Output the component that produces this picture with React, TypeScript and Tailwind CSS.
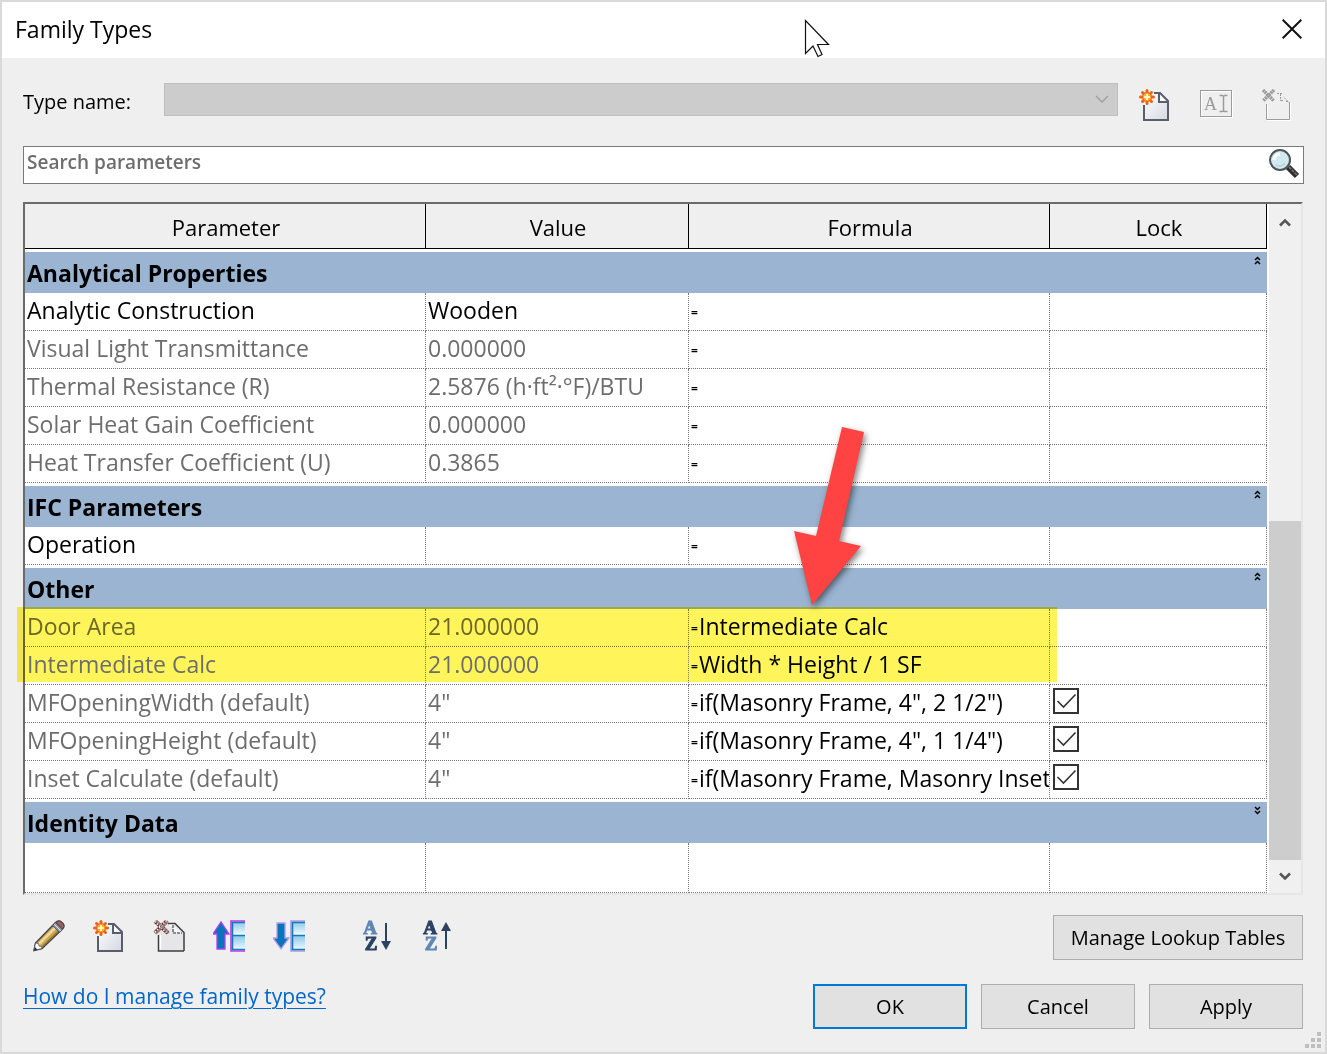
import { type ReactNode } from "react";

type Param = {
  name: string;
  value: ReactNode;
  formula?: string;
  enabled?: boolean;
  locked?: boolean;
  marked?: boolean;
};

type Group = { title: string; collapsed?: boolean; params: Param[] };

const GROUPS: Group[] = [
  {
    title: "Analytical Properties",
    params: [
      { name: "Analytic Construction", value: "Wooden", enabled: true },
      { name: "Visual Light Transmittance", value: "0.000000" },
      { name: "Thermal Resistance (R)", value: "2.5876 (h·ft²·°F)/BTU" },
      { name: "Solar Heat Gain Coefficient", value: "0.000000" },
      { name: "Heat Transfer Coefficient (U)", value: "0.3865" },
    ],
  },
  { title: "IFC Parameters", params: [{ name: "Operation", value: "", enabled: true }] },
  {
    title: "Other",
    params: [
      { name: "Door Area", value: "21.000000", formula: "Intermediate Calc", marked: true },
      { name: "Intermediate Calc", value: "21.000000", formula: "Width * Height / 1 SF" },
      { name: "MFOpeningWidth (default)", value: '4"', formula: 'if(Masonry Frame, 4", 2 1/2")', locked: true },
      { name: "MFOpeningHeight (default)", value: '4"', formula: 'if(Masonry Frame, 4", 1 1/4")', locked: true },
      { name: "Inset Calculate (default)", value: '4"', formula: "if(Masonry Frame, Masonry Inset", locked: true },
    ],
  },
  { title: "Identity Data", collapsed: true, params: [] },
];

function Spark() {
  return (
    <g>
      <g stroke="#e8641b" strokeWidth="3" strokeLinecap="round">
        <path d="M8 1.500v13M1.500 8h13M3.500 3.500l9 9M12.500 3.500l-9 9" />
      </g>
      <circle cx="8" cy="8" r="4.500" fill="#fbab25" stroke="#e8641b" strokeWidth="1" />
      <path d="M8 5v6M5 8h6" stroke="#fff3c4" strokeWidth="2" />
    </g>
  );
}

function NewIcon({ id }: { id: string }) {
  return (
    <svg viewBox="0 0 32 32" className="size-8" aria-hidden="true">
      <defs>
        <linearGradient id={id} x1="0" y1="0" x2="1" y2="1">
          <stop offset="0" stopColor="#ffffff" />
          <stop offset="1" stopColor="#d5d8e2" />
        </linearGradient>
      </defs>
      <path d="M5 12V31H29V12L21 4H12z" fill={`url(#${id})`} />
      <path d="M5 16V31H29V12L21 4H15" fill="none" stroke="#5a5e6a" strokeWidth="2" />
      <path d="M20 5v8h8" fill="#fafafa" stroke="#5a5e6a" strokeWidth="2" />
      <Spark />
    </svg>
  );
}

function RenameIcon() {
  return (
    <svg viewBox="0 0 32 32" className="size-8 overflow-visible" aria-hidden="true">
      <rect x="1.5" y="2.5" width="31" height="26" fill="none" stroke="#fff" />
      <rect x="0.5" y="1.5" width="31" height="26" fill="none" stroke="#9b9b9b" />
      <text x="4" y="21" fontFamily="Liberation Serif, serif" fontSize="18" fill="#9b9b9b">A</text>
      <path d="M19.500 6.500h3l1 1 1-1h3M23.500 7v14M19.500 22.500h3l1-1 1 1h3" fill="none" stroke="#9b9b9b" strokeWidth="1.500" />
    </svg>
  );
}

function DeleteDisabledIcon() {
  return (
    <svg viewBox="0 0 32 32" className="size-8" aria-hidden="true">
      <path d="M6.500 16v15.500h23V13" fill="none" stroke="#fff" />
      <path d="M5.500 15v15.500h23V13" fill="none" stroke="#9b9b9b" />
      <path d="M2 1l11 11M13 1L2 12" stroke="#9b9b9b" strokeWidth="3.500" strokeDasharray="2 .6" />
      <path d="M16 4.500h6M19.500 5v7M20 11.500h3M23 8.500l5 5M25 12.500h3" stroke="#9b9b9b" strokeDasharray="2 1" fill="none" />
    </svg>
  );
}

function DeleteIcon() {
  return (
    <svg viewBox="0 0 32 32" className="size-8" aria-hidden="true">
      <path d="M6 12V31H31V12L23 4H14z" fill="#e6e6e8" />
      <path d="M5.500 15V31H31M15 3.500h7l9 9V31" fill="none" stroke="#3f3f3f" strokeWidth="1.500" />
      <path d="M7.500 15V29.500M16 5.500h5" fill="none" stroke="#fff" strokeWidth="1.500" />
      <path d="M20 5v8h9" fill="#f4f4f4" stroke="#6a6a6a" strokeWidth="1.500" strokeDasharray="3 1" />
      <path d="M2 1l13 12M14 1L2 13" stroke="#6d2222" strokeWidth="4" />
      <path d="M2 1l13 12M14 1L2 13" stroke="#f5f5f5" strokeWidth="3" strokeDasharray="1.500 1.500" />
      <path d="M3 1l13 12M15 1L3 13" stroke="#8b8b8b" strokeWidth="1.500" />
    </svg>
  );
}

function PencilIcon() {
  return (
    <svg viewBox="0 0 32 32" className="size-8" aria-hidden="true">
      <path d="M1 30.500L2.500 23 22.500 2.500c2-2 4-2 6-.5l1.500 1.500c1.500 2 1 4-.5 5.500L9 28.500z" fill="#caa350" stroke="#42444c" strokeWidth="1.400" />
      <path d="M4.500 23.500L22 6l2 2L6.500 25.500z" fill="#efd797" />
      <path d="M7.500 27.500L25.500 10l1 1L9 28z" fill="#94722c" />
      <path d="M1 30.500L2.500 23l3 .5.500 2.500 2.500.5.500 2z" fill="#fafafa" stroke="#55575e" strokeWidth=".8" />
      <path d="M1 30.500l.8-3.500 2.700 2.700z" fill="#2b2b2b" />
      <path d="M19.500 5.500l3-3 7 7-3 3z" fill="#8b94a4" stroke="#42444c" strokeWidth=".8" />
      <path d="M21 4l7 7" stroke="#dfe3ea" />
      <path d="M23 2.500c2-2 4-2 5.500-.5l1.500 1.500c1.500 2 1 4-.5 5.500z" fill="#9a5f5c" stroke="#42444c" strokeWidth=".8" />
    </svg>
  );
}

function MoveIcon({ down, id }: { down?: boolean; id: string }) {
  return (
    <svg viewBox="0 0 32 32" className="size-8" aria-hidden="true">
      <defs>
        <linearGradient id={id} x1="0" y1="0" x2="0" y2="1">
          <stop offset="0" stopColor="#8cc8ea" />
          <stop offset="1" stopColor="#f4fbff" />
        </linearGradient>
      </defs>
      <path
        d={down ? "M4 3h8v15h4L8 29 0 18h4z" : "M4 29V14H0L8 2l8 12h-4v15z"}
        fill="#0a74bb"
        stroke={down ? "#b49be8" : "#b63cf0"}
        strokeWidth="1.300"
      />
      <path d="M32 1H18v30h14" fill="none" stroke={down ? "#a99be8" : "#b63cf0"} strokeWidth="1.600" />
      <rect x="19" y="2" width="13" height="13" fill={`url(#${id})`} />
      <rect x="19" y="16" width="13" height="14" fill={`url(#${id})`} />
      <path d="M32 2.500H19.500v27H32M19.500 15.500H32" fill="none" stroke="#1878b4" strokeWidth="1.600" />
    </svg>
  );
}

function SortIcon({ up }: { up?: boolean }) {
  const light = "#5f88b4";
  const dark = "#2b4263";
  return (
    <svg viewBox="0 0 32 32" className="size-8 overflow-visible" aria-hidden="true">
      <g fontFamily="Liberation Serif, serif" fontWeight="700" fontSize="19" textAnchor="middle" strokeWidth="1">
        <text x="9" y="14" fill={up ? dark : light} stroke={up ? dark : light}>A</text>
        <text x="10" y="30" fill={up ? light : dark} stroke={up ? light : dark}>Z</text>
      </g>
      <path d={up ? "M25 29V8" : "M25 3v21"} stroke={dark} strokeWidth="2" />
      <path d={up ? "M25 2l5 9H20z" : "M25 30l5-9H20z"} fill={dark} />
    </svg>
  );
}

function SearchIcon() {
  return (
    <svg viewBox="0 0 32 32" className="size-8" aria-hidden="true">
      <path d="M20 19l9 9" stroke="#2e2e2e" strokeWidth="6" />
      <path d="M21 19l8 8" stroke="#7a7a7a" strokeWidth="1.500" strokeDasharray="3 1" />
      <circle cx="12" cy="12" r="10" fill="#d3e9f0" stroke="#4b5457" strokeWidth="2" />
      <path d="M6 12a6 6 0 016-6" stroke="#fff" strokeWidth="3" fill="none" />
      <path d="M8 17a7 7 0 009-2" stroke="#b2d9e4" strokeWidth="2" fill="none" />
    </svg>
  );
}

function GroupChevron({ collapsed }: { collapsed?: boolean }) {
  return (
    <svg viewBox="0 0 7 9" className="h-[9px] w-[7px]" fill="none" stroke="#000" strokeWidth="1.500" aria-hidden="true">
      <path d={collapsed ? "M1 1l2.500 2.500L6 1M1 5l2.500 2.500L6 5" : "M1 4l2.500-2.500L6 4M1 8l2.500-2.500L6 8"} />
    </svg>
  );
}

function ScrollArrow({ down }: { down?: boolean }) {
  return (
    <svg viewBox="0 0 12 9" className="h-[9px] w-3" fill="none" stroke="#555" strokeWidth="2.600" aria-hidden="true">
      <path d={down ? "M1 1.500l5 5 5-5" : "M1 7.500l5-5 5 5"} />
    </svg>
  );
}

/* Marker stroke over the two calculated rows, and the arrow that points at them. */
function Callout() {
  return (
    <>
      <span className="pointer-events-none absolute -top-0.5 -left-2 h-[75px] w-[83.7%] bg-[#fff45a] mix-blend-multiply" />
      <svg
        viewBox="0 0 84 190"
        className="pointer-events-none absolute -top-[187px] left-[61.6%] z-10 h-[190px] w-[84px] overflow-visible drop-shadow-[2px_3px_3px_rgba(0,0,0,0.5)]"
        aria-hidden="true"
      >
        <path d="M52 5l22 5-25 109 22 5-49 59L4 109l22 5z" fill="#ff4242" />
      </svg>
    </>
  );
}

const CELL = "h-[38px] border-r border-b border-dotted border-[#777] p-0 pb-1 text-left align-middle font-normal";

function ParamRow({ p }: { p: Param }) {
  const tone = p.enabled ? "text-black" : "text-[#6d6d6d]";
  return (
    <tr className="relative">
      <th scope="row" className={`${CELL} ${tone} pl-0.5 whitespace-nowrap`}>
        {p.name}
        {p.marked && <Callout />}
      </th>
      <td className={`${CELL} ${tone} pl-0.5 whitespace-nowrap`}>{p.value}</td>
      <td className={`${CELL} overflow-hidden pl-0.5 whitespace-nowrap`}>
        <span className="flex items-center">
          <span className="w-2 shrink-0 pt-1.5 text-xs leading-6 font-bold">=</span>
          {p.formula}
        </span>
      </td>
      <td className={`${CELL} pl-[3px]`}>
        {p.locked && (
          <span className="relative mb-0.5 flex size-[26px]">
            <input
              type="checkbox"
              defaultChecked
              aria-label={`Lock ${p.name}`}
              className="peer size-[26px] appearance-none border-2 border-[#333] bg-white"
            />
            <svg viewBox="0 0 26 26" className="pointer-events-none absolute inset-0 hidden peer-checked:block" aria-hidden="true">
              <path d="M4.500 13l6 6L22.500 6.500" fill="none" stroke="#333" strokeWidth="1.600" />
            </svg>
          </span>
        )}
      </td>
    </tr>
  );
}

function PushButton({ children, primary, wide }: { children: ReactNode; primary?: boolean; wide?: boolean }) {
  return (
    <button
      type="button"
      className={`h-[45px] bg-[#e1e1e1] text-[20px] ${wide ? "w-[250px]" : "w-[154px]"} ${
        primary ? "border-2 border-[#0078d7]" : "border border-[#adadad]"
      }`}
    >
      {children}
    </button>
  );
}

export default function App() {
  return (
    <main className="relative flex min-h-screen flex-col border-2 border-[#d9d9d9] bg-[#efefef] font-['Open_Sans','Noto_Sans',sans-serif] text-[23px] leading-[30px] text-black">
      <header className="flex h-14 items-center justify-between bg-white pr-[22px] pb-0.5 pl-[13px]">
        <h1>Family Types</h1>
        <button type="button" aria-label="Close" className="p-px">
          <svg viewBox="0 0 20 20" className="size-5" stroke="#111" strokeWidth="2" aria-hidden="true">
            <path d="M.7.7l18.600 18.600M19.300.7L.7 19.300" />
          </svg>
        </button>
      </header>

      <svg viewBox="0 0 26 39" className="pointer-events-none absolute top-[17px] left-[802px] h-[39px] w-[26px]" aria-hidden="true">
        <path d="M1.500 1.500v33l7.500-7.500 5 10.500 4-2-4.500-10H24.500z" fill="#fff" stroke="#111" strokeWidth="1.200" />
      </svg>

      <div className="flex grow flex-col pr-[22px] pb-[23px] pl-[21px]">
        <div className="mt-[25px] flex items-start">
          <label htmlFor="type-name" className="w-[141px] shrink-0 pt-1 text-[20px]">Type name:</label>
          <span className="relative flex grow">
            <select id="type-name" disabled className="h-[33px] w-full appearance-none border border-[#bfbfbf] bg-[#ccc] opacity-100">
              <option></option>
            </select>
            <svg viewBox="0 0 14 9" className="pointer-events-none absolute top-3 right-[9px] h-[9px] w-3.5" fill="none" stroke="#9d9d9d" strokeWidth="1.300" aria-hidden="true">
              <path d="M1 1l6 6 6-6" />
            </svg>
          </span>
          <span className="mr-2.5 ml-[21px] flex gap-[29px] pt-1.5">
            <button type="button" aria-label="New type"><NewIcon id="page-type" /></button>
            <button type="button" aria-label="Rename type" disabled><RenameIcon /></button>
            <button type="button" aria-label="Delete type" disabled><DeleteDisabledIcon /></button>
          </span>
        </div>

        <div className="mt-[25px] -mr-px flex h-[38px] items-start justify-between border border-[#7a7a7a] bg-white">
          <input
            type="text"
            aria-label="Search parameters"
            placeholder="Search parameters"
            className="h-[30px] grow bg-transparent pl-[3px] text-[19px] font-semibold outline-none placeholder:text-[#6d6d6d]"
          />
          <button type="button" aria-label="Search" className="pt-px pr-[3px]"><SearchIcon /></button>
        </div>

        <div className="mt-[18px] flex border-2 border-t-[#6b6b6b] border-r-[#e6e6e6] border-b-[#e6e6e6] border-l-[#6b6b6b] bg-white">
          <table className="mr-0.5 w-full table-fixed border-separate border-spacing-0">
            <colgroup>
              <col className="w-[401px]" />
              <col className="w-[263px]" />
              <col className="w-[361px]" />
              <col className="w-[217px]" />
            </colgroup>
            <thead>
              <tr>
                {["Parameter", "Value", "Formula", "Lock"].map((h) => (
                  <th key={h} scope="col" className="h-[45px] border-r border-b border-black bg-[#efefef] p-0 pt-0.5 pl-0.5 text-[22px] font-normal">{h}</th>
                ))}
              </tr>
            </thead>
            {GROUPS.map((g) => (
              <tbody key={g.title}>
                <tr>
                  <th scope="rowgroup" colSpan={4} className="h-11 border-t-[3px] border-white bg-[#9ab4d1] p-0 pl-0.5 text-left font-bold">
                    <span className="flex h-[41px] items-center justify-between">
                      <span>{g.title}</span>
                      <button type="button" aria-label={`Toggle ${g.title}`} className="self-start pt-1 pr-1.5">
                        <GroupChevron collapsed={g.collapsed} />
                      </button>
                    </span>
                  </th>
                </tr>
                {g.params.map((p) => <ParamRow key={p.name} p={p} />)}
              </tbody>
            ))}
            <tbody>
              <tr>
                {[0, 1, 2, 3].map((i) => (
                  <td key={i} className="h-[50px] border-r border-b border-dotted border-[#777] p-0" />
                ))}
              </tr>
            </tbody>
          </table>
          <div className="flex w-8 shrink-0 flex-col bg-[#f0f0f0]">
            <button type="button" aria-label="Scroll up" className="flex h-9 items-center justify-center"><ScrollArrow /></button>
            <div className="flex grow flex-col justify-end">
              <div className="h-[339px] bg-[#cdcdcd]" />
            </div>
            <button type="button" aria-label="Scroll down" className="flex h-[33px] items-center justify-center"><ScrollArrow down /></button>
          </div>
        </div>

        <div className="mt-5 flex items-start justify-between">
          <div className="flex gap-7 pt-[5px] pl-2.5">
            <button type="button" aria-label="Edit parameter"><PencilIcon /></button>
            <button type="button" aria-label="New parameter"><NewIcon id="page-param" /></button>
            <button type="button" aria-label="Delete parameter"><DeleteIcon /></button>
            <button type="button" aria-label="Move up"><MoveIcon id="rows-up" /></button>
            <button type="button" aria-label="Move down"><MoveIcon id="rows-down" down /></button>
            <button type="button" aria-label="Sort ascending" className="ml-7"><SortIcon /></button>
            <button type="button" aria-label="Sort descending"><SortIcon up /></button>
          </div>
          <PushButton wide>Manage Lookup Tables</PushButton>
        </div>

        <div className="mt-6 flex items-start justify-between">
          <a href="#help" className="text-[21px] leading-6 text-[#0066cc] underline decoration-1 underline-offset-4">How do I manage family types?</a>
          <div className="flex gap-3.5">
            <PushButton primary>OK</PushButton>
            <PushButton>Cancel</PushButton>
            <PushButton>Apply</PushButton>
          </div>
        </div>
      </div>

      <svg viewBox="0 0 16 16" className="absolute right-1 bottom-1 size-4" fill="#bfbfbf" aria-hidden="true">
        <path d="M12 0h4v4h-4zM6 6h4v4H6zM12 6h4v4h-4zM0 12h4v4H0zM6 12h4v4H6zM12 12h4v4h-4z" />
      </svg>
    </main>
  );
}
